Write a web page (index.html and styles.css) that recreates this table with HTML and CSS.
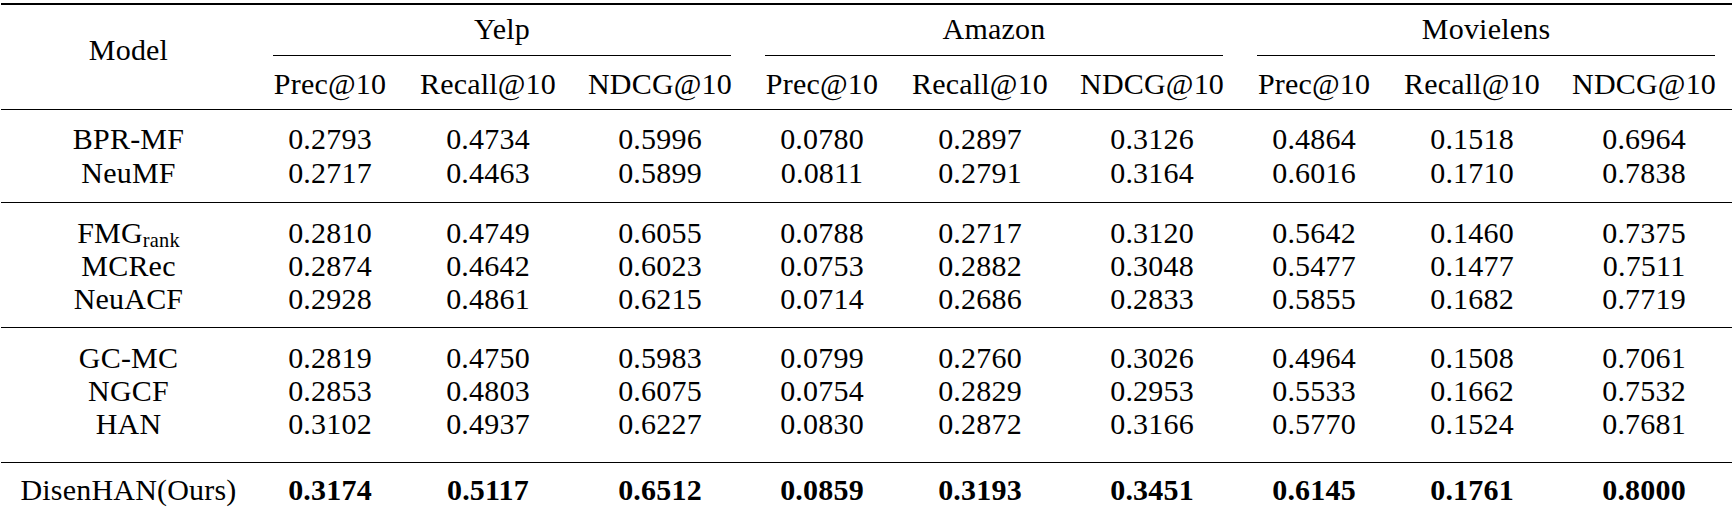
FILE: index.html
```html
<!DOCTYPE html>
<html>
<head>
<meta charset="utf-8">
<link rel="stylesheet" href="styles.css">
</head>
<body>
<div class="wrap">
<table class="results">
  <colgroup>
    <col class="c-model">
    <col class="c-prec"><col class="c-rec"><col class="c-ndcg">
    <col class="c-prec"><col class="c-rec"><col class="c-ndcg">
    <col class="c-prec"><col class="c-rec"><col class="c-ndcg">
  </colgroup>
  <thead>
    <tr class="h1">
      <th rowspan="2" class="model-head"><span class="model-label">Model</span></th>
      <th colspan="3" class="ds"><div class="ds-label">Yelp</div></th>
      <th colspan="3" class="ds"><div class="ds-label">Amazon</div></th>
      <th colspan="3" class="ds"><div class="ds-label">Movielens</div></th>
    </tr>
    <tr class="h2">
      <th>Prec@10</th><th>Recall@10</th><th>NDCG@10</th>
      <th>Prec@10</th><th>Recall@10</th><th>NDCG@10</th>
      <th>Prec@10</th><th>Recall@10</th><th>NDCG@10</th>
    </tr>
  </thead>
  <tbody class="g1">
    <tr><td>BPR-MF</td><td>0.2793</td><td>0.4734</td><td>0.5996</td><td>0.0780</td><td>0.2897</td><td>0.3126</td><td>0.4864</td><td>0.1518</td><td>0.6964</td></tr>
    <tr><td>NeuMF</td><td>0.2717</td><td>0.4463</td><td>0.5899</td><td>0.0811</td><td>0.2791</td><td>0.3164</td><td>0.6016</td><td>0.1710</td><td>0.7838</td></tr>
  </tbody>
  <tbody class="g2">
    <tr><td>FMG<sub class="sub">rank</sub></td><td>0.2810</td><td>0.4749</td><td>0.6055</td><td>0.0788</td><td>0.2717</td><td>0.3120</td><td>0.5642</td><td>0.1460</td><td>0.7375</td></tr>
    <tr><td>MCRec</td><td>0.2874</td><td>0.4642</td><td>0.6023</td><td>0.0753</td><td>0.2882</td><td>0.3048</td><td>0.5477</td><td>0.1477</td><td>0.7511</td></tr>
    <tr><td>NeuACF</td><td>0.2928</td><td>0.4861</td><td>0.6215</td><td>0.0714</td><td>0.2686</td><td>0.2833</td><td>0.5855</td><td>0.1682</td><td>0.7719</td></tr>
  </tbody>
  <tbody class="g3">
    <tr><td>GC-MC</td><td>0.2819</td><td>0.4750</td><td>0.5983</td><td>0.0799</td><td>0.2760</td><td>0.3026</td><td>0.4964</td><td>0.1508</td><td>0.7061</td></tr>
    <tr><td>NGCF</td><td>0.2853</td><td>0.4803</td><td>0.6075</td><td>0.0754</td><td>0.2829</td><td>0.2953</td><td>0.5533</td><td>0.1662</td><td>0.7532</td></tr>
    <tr><td>HAN</td><td>0.3102</td><td>0.4937</td><td>0.6227</td><td>0.0830</td><td>0.2872</td><td>0.3166</td><td>0.5770</td><td>0.1524</td><td>0.7681</td></tr>
  </tbody>
  <tbody class="ours">
    <tr><td>DisenHAN(Ours)</td><td>0.3174</td><td>0.5117</td><td>0.6512</td><td>0.0859</td><td>0.3193</td><td>0.3451</td><td>0.6145</td><td>0.1761</td><td>0.8000</td></tr>
  </tbody>
</table>
</div>
</body>
</html>
```

FILE: styles.css
```css
html, body {
  margin: 0;
  padding: 0;
  background: #ffffff;
}

.wrap {
  padding: 3px 0 0 1px;
}

.results {
  width: 1731px;
  table-layout: fixed;
  border-collapse: collapse;
  font-family: "Liberation Serif", "Times New Roman", serif;
  font-size: 30px;
  letter-spacing: 0.2px;
  color: #000;
  border-top: 2px solid #000;
  border-bottom: 2px solid #000;
}

.c-model { width: 255px; }
.c-prec { width: 148px; }
.c-rec { width: 168px; }
.c-ndcg { width: 176px; }

.results th,
.results td {
  padding: 0 12px;
  font-weight: normal;
  text-align: center;
  white-space: nowrap;
  line-height: 33px;
}

.h1 th {
  height: 51px;
  padding: 0;
}

.model-head {
  vertical-align: middle;
}

.model-label {
  display: block;
  padding-bottom: 16px;
}

.ds-label {
  margin: 0 17px;
  height: 51px;
  line-height: 48px;
  border-bottom: 1px solid #000;
  box-sizing: border-box;
  padding-bottom: 2px;
}

.h2 th {
  height: 48px;
  line-height: 48px;
  padding-top: 4px;
  padding-bottom: 1px;
}

tbody {
  border-top: 1px solid #000;
}

.g1 td {
  line-height: 34px;
}

.g1 tr:first-child td { padding-top: 12px; }
.g1 tr:last-child td { padding-bottom: 12px; }

.g2 tr:first-child td { padding-top: 13px; }
.g2 tr:last-child td { padding-bottom: 12px; }

.g3 tr:first-child td { padding-top: 13px; }
.g3 tr:last-child td { padding-bottom: 22px; }

.ours tr:first-child td { padding-top: 10px; }
.ours tr:last-child td { padding-bottom: 13px; }

.ours td + td {
  font-weight: bold;
}

.sub {
  font-size: 0.68em;
  line-height: 0;
  vertical-align: -0.22em;
}
```
